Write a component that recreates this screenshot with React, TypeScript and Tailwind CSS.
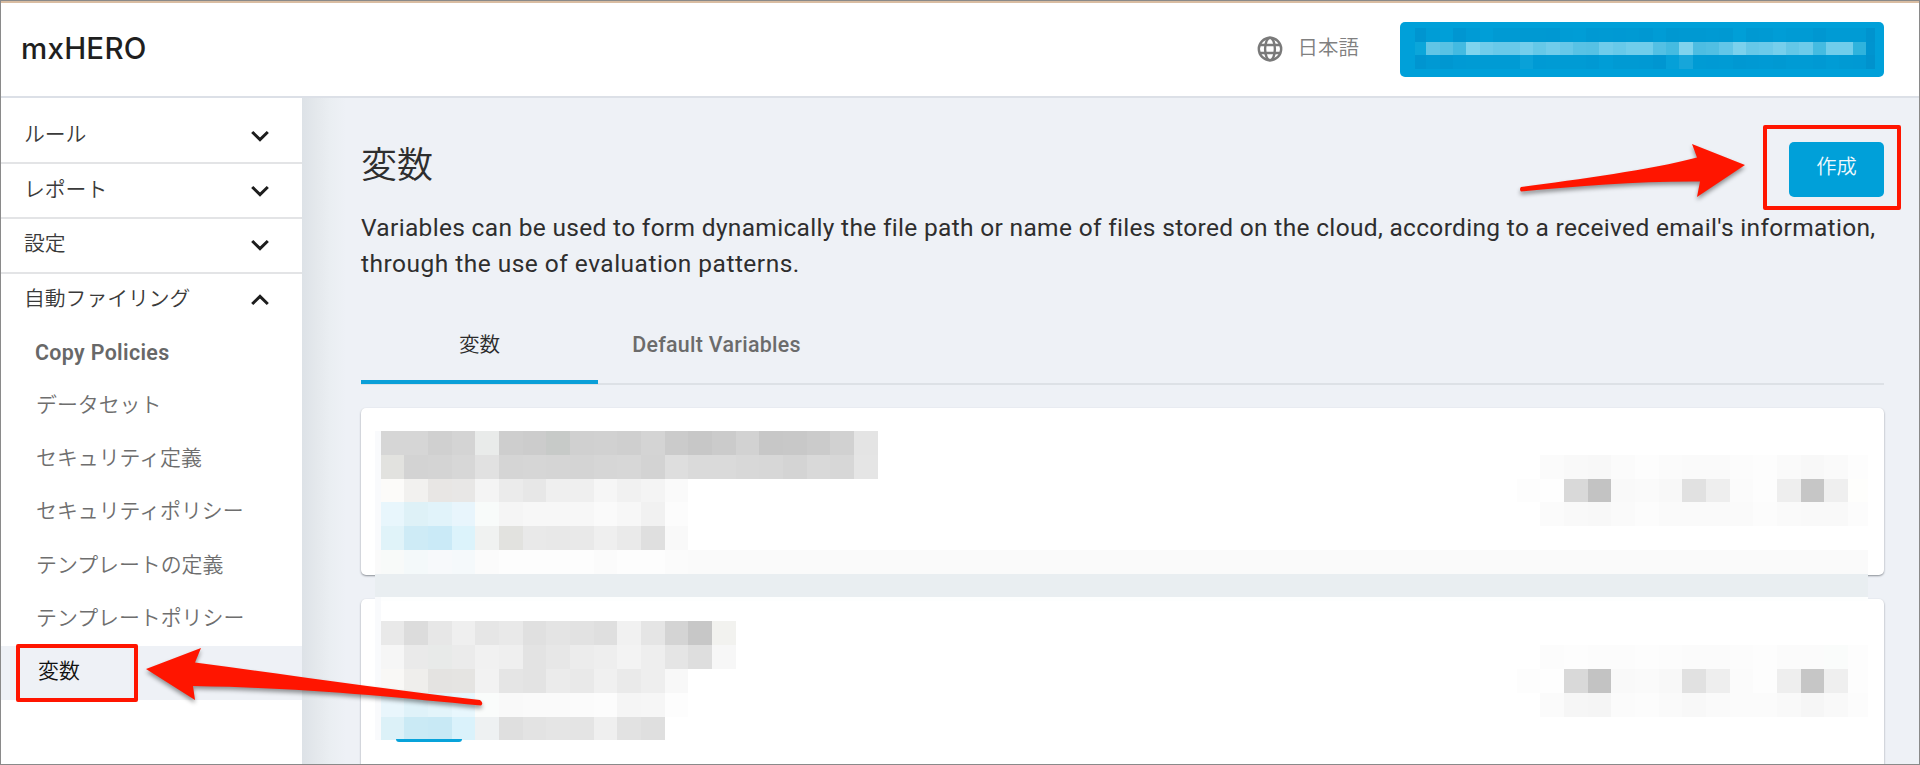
import React from 'react';

interface NavSection {
    label: string;
    open?: boolean;
}

const sections: NavSection[] = [
    { label: 'ルール' },
    { label: 'レポート' },
    { label: '設定' },
    { label: '自動ファイリング', open: true },
];

const subItems = [
    'データセット',
    'セキュリティ定義',
    'セキュリティポリシー',
    'テンプレートの定義',
    'テンプレートポリシー',
];

// Each run: row, first column, then one colour per cell
type Run = [number, number, string];

const leftRuns: Run[] = [
    [0, 0, 'd6d6d6 d6d6d6 d0d0d0 d4d4d4 e9ebea cecece cccccc c7cac8 d0d0d0 d1d1d1 cfcfcf d4d4d4 cbcbcb c7c7c7 cbcbcb d2d2d2 c7c7c7 c8c8c8 cbcbcb d1d1d1 e4e4e4'],
    [1, 0, 'e2e2df d3d3d3 d4d4d4 d7d7d7 e1e1e1 d5d5d5 d6d6d6 d5d5d5 d4d4d4 d6d6d6 d7d7d7 d3d3d3 dedede dadada dadada d8d8d8 d7d7d7 d4d4d4 d9d9d9 d7d7d7 e5e5e5'],
    [2, 0, 'fcfbf9 f2f1ef e8e6e4 e8e7e6 f4f4f4 ebebeb e7e7e7 efefef efefef f6f6f6 f1f1f1 f4f4f4 fafafa'],
    [3, 0, 'e8f6fc def1f7 e1f3fa e8f5fc f8fbfa f5f5f5 f7f7f7 f7f7f7 f7f7f7 fafafa f7f7f7 f1f1f1 fcfcfc'],
    [4, 0, 'e0f3f9 ceebf6 caeaf7 dcf3fb f0f2f1 e2e2df e9e9e9 e8e8e8 e9e9e9 efefef eaeaea dfdfdf f9f9f9'],
    [5, 0, 'f8faf9 f4f9fa f7f9fb f5f9fb fbfbfb fdfdfd fdfdfd fdfdfd fdfdfd fbfbfb fdfdfd fdfdfd fbfbfb'],
    [8, 0, 'e9e9e9 dcdcdc e7e7e7 efefef e6e6e6 e9e9e9 e0e0e0 e4e4e4 e2e2e2 dfdfdf f1f1f1 e5e5e5 d4d4d4 c7c7c7 f2f2ef'],
    [9, 0, 'f6f6f6 eaeaea e8eae9 ebebeb f1f1f1 efefef e3e3e3 e7e7e7 ececec eeeeee f3f3f3 eeeeee e5e5e5 dedede f7f7f7'],
    [10, 0, 'f9f8f6 efeeec e4e3e1 e5e4e2 f2f2f2 e5e5e5 e3e3e3 ebebeb e9e9e9 f0f0f0 eaeaea eeeeee f8f8f8'],
    [11, 0, 'e9f6fc dff2f9 e3f4fa e8f7fd fafcfb f9f9f9 fafafa fafafa fbfbfb fcfcfc f5f5f5 f6f6f6 fdfdfd'],
    [12, 0, 'dcf1f8 caeaf5 c8e9f5 daf2fb eef1f2 dfdfdf e3e3e3 e5e5e5 e4e4e4 efefef e2e2e2 dfdfdf'],
];

const rightRuns: Run[] = [
    [1, 49, 'fbfbfb f9f9f9 f8f8f8 fbfbfb fdfdfd fbfbfb fafafa fafafa fcfcfc fdfdfd fafafa f8f8f8 fafafa fdfdfd'],
    [2, 48, 'fdfdfd fefefe d9d9d9 c3c3c3 f9f9f9 fafafa f8f8f8 e1e1e1 eeeeee fbfbfb fdfdfd eeeeee c6c6c6 efefef fefefc'],
    [3, 49, 'fbfbfb f9f9f9 f8f8f8 fafafa fcfcfc fafafa fafafa fafafa fafafa fcfcfc fafafa f9f9f9 f9f9f9 fcfcfc'],
    [9, 49, 'fcfcfc fdfdfd fcfcfc fcfcfc fdfdfd fcfcfc fbfbfb fbfbfb fcfcfc fdfdfd fbfbfb fbfbfb fafcfb fdfdfd'],
    [10, 48, 'fdfdfd fefefe d9d9d9 c3c3c3 f9f9f9 fafafa f8f8f8 e1e1e1 eeeeee fbfbfb fdfdfd eeeeee c6c6c6 efefef fdfdfd'],
    [11, 49, 'fbfbfb f6f6f6 f5f5f5 fbfbfb fcfcfc fafafa f8f8f8 fafafa fbfbfb fbfbfb f9f9f9 f6f6f6 f9f9f9 fcfcfc'],
];

const barTop = '0095d0 009dd6 009fd8 0096d1 009bd5 009ed7 009ad3 009ad3 0099d2 0099d2 0098d2 009cd5 009dd6 0099d3 009ad3 0099d3 009ad3 0098d2 009cd5 0098d1 0099d2 0099d2 009ad3 0099d2 009fd7 0099d2 009ad3 009dd6 009bd4 009bd4 0097d1 009bd4 009bd4 009bd4 0093ce';
const barMid = '0ba6da 61c5e6 58c2e4 43bae1 7fd4ee 70cceb 69c9e9 69c9e9 74ceec 65c8e8 70cceb 66c8e9 58c2e5 56c1e4 6fcceb 67c9e9 70cdeb 70cdeb 53c0e4 45bbe1 80d3ed 4dbde2 51bfe3 62c6e8 7bd1ed 67c8e8 6bcaea 76cfec 64c7e7 6dcbea 44bbe1 70cdeb 70cdeb 2fb3dd 0094cf';
const barLow = '0095d0 0099d3 0097d1 009ad4 009bd4 009bd4 009bd4 009bd4 09a1d8 009ad4 009bd4 009bd4 009bd4 0099d3 009dd6 009ad3 009ad3 0099d3 0096d1 05a0d8 16a6da 009bd4 009ad4 009bd4 0098d2 0099d3 009ad4 0099d2 009bd4 009bd4 0099d3 009cd5 009ad3 0099d3 0092cd';

const CELL_W = 23.667;
const CELL_H = 23.8;

const Cells: React.FC<{ runs: Run[] }> = ({ runs }) => (
    <>
        {runs.map(([row, col, colors]) =>
            colors.split(' ').map((c, i) => {
                const x = Math.round(5.5 + (col + i) * CELL_W);
                const next = Math.min(Math.round(5.5 + (col + i + 1) * CELL_W), 1493);
                const y = Math.round(row * CELL_H);
                return <rect key={`${row}-${i}`} x={x} y={y} width={next - x} height={Math.round((row + 1) * CELL_H) - y} fill={`#${c}`} />;
            })
        )}
    </>
);

const CardMosaic: React.FC = () => (
    <svg className="absolute left-[14px] top-[23px]" width="1493" height="310" shapeRendering="crispEdges">
        <rect x="0" y="0" width="6" height="143" fill="#f9fafc" />
        <rect x="0" y="119" width="1493" height="24" fill="#fafafa" />
        <rect x="0" y="143" width="1493" height="23" fill="#e9eef1" />
        <rect x="0" y="166" width="1493" height="4" fill="#fdfefe" />
        <rect x="0" y="166" width="6" height="143" fill="#f9fafc" />
        <Cells runs={leftRuns} />
        <Cells runs={rightRuns} />
    </svg>
);

const AccountBar: React.FC = () => (
    <div className="w-[484px] h-[55px] rounded-[5px] bg-[#00a0d9] pl-[15px] pt-[6px]">
        <svg width="460" height="41" shapeRendering="crispEdges">
            {[barTop, barMid, barLow].map((colors, row) =>
                colors.split(' ').map((c, i) => {
                    const x = i === 0 ? 0 : Math.round(11.2 + (i - 1) * 13.33);
                    const next = Math.min(Math.round(11.2 + i * 13.33), 460);
                    return <rect key={`${row}-${i}`} x={x} y={[0, 14, 27][row]} width={next - x} height={[14, 13, 14][row]} fill={`#${c}`} />;
                })
            )}
        </svg>
    </div>
);

const Chevron: React.FC<{ up?: boolean }> = ({ up }) => (
    <svg width="18" height="12" viewBox="0 0 18 12" fill="none" stroke="#1d1d1d" strokeWidth="3">
        <path d={up ? 'M1.2 10L9 2.4L16.8 10' : 'M1.2 2L9 9.6L16.8 2'} />
    </svg>
);

const Globe: React.FC = () => (
    <svg className="-mt-[2px]" width="26" height="26" viewBox="0 0 26 26" fill="none" stroke="#7a7a7a" strokeWidth="2.4">
        <circle cx="13" cy="13" r="11.2" />
        <ellipse cx="13" cy="13" rx="4.9" ry="11.2" />
        <path d="M2.4 9H23.6M2.4 17H23.6" />
    </svg>
);

const App: React.FC = () => (
    <div className="relative w-[1920px] h-[765px] overflow-hidden border border-[#8a8a8a] bg-white font-[Roboto,'Noto_Sans_CJK_JP',sans-serif] text-[#2b2b2b] flex flex-col">
        <div className="h-[2px] shrink-0 bg-[#d9bda2]"></div>
        <header className="h-[95px] shrink-0 flex items-center justify-between border-b-2 border-[#dce0e7] pl-[20px] pr-[35px]">
            <h1 className="-mt-px font-[Inter,sans-serif] font-medium text-[29.5px] leading-none tracking-[0.25px] text-[#1f1f1f]">mxHERO</h1>
            <div className="flex items-center">
                <Globe />
                <span className="ml-[15px] mr-[41px] -mt-[3px] text-[20.5px] font-[350] text-[#808080]">日本語</span>
                <AccountBar />
            </div>
        </header>

        <div className="flex flex-1 min-h-0">
            <aside className="w-[301px] shrink-0 bg-white">
                <div className="h-[11.5px]"></div>
                {sections.map((s) => (
                    <div
                        key={s.label}
                        className={`flex items-center justify-between pl-[23px] pr-[33px] font-[350] ${s.open ? 'h-[53px]' : 'h-[54.7px] border-b-2 border-[#e3e4e6]'}`}
                    >
                        <span className="-mt-[2px] text-[20.8px] leading-[30px] text-[#3a3a3a]">{s.label}</span>
                        <Chevron up={s.open} />
                    </div>
                ))}
                <div className="h-[53.3px] flex items-center pl-[34px] text-[21.4px] font-semibold tracking-[0.35px] text-[#686868]">Copy Policies</div>
                {subItems.map((label) => (
                    <div key={label} className="h-[53.3px] flex items-center pl-[35px] pb-[2px] text-[20.9px] font-[350] text-[#6e6e6e]">{label}</div>
                ))}
                <div className="h-[53.3px] flex items-center pl-[37px] pb-[2px] bg-[#eef1f6] text-[20.9px] font-[350] text-[#111]">変数</div>
            </aside>

            <main className="flex-1 min-w-0 bg-[#eef1f6] bg-[linear-gradient(to_right,#dde2e7_0px,#e4e8ec_14px,#eaeef2_28px,#eef1f6_44px)] pl-[59px] pr-[35px]">
                <div className="flex justify-between h-[120px] pt-[44px]">
                    <h2 className="mt-[-2px] text-[36px] leading-[52px] font-[350] text-[#2e2e2e]">変数</h2>
                    <button className="w-[95px] h-[55px] rounded-[5px] bg-[#00a0d9] pb-[5px] text-[20.3px] font-[350] text-[#f0f9fd]">作成</button>
                </div>
                <p className="h-[88px] -mt-[8px] text-[24.5px] leading-[35.5px] tracking-[0.32px] whitespace-nowrap text-[#2e2e2e]">
                    Variables can be used to form dynamically the file path or name of files stored on the cloud, according to a received email's information,
                    <br />
                    <span className="tracking-[0.48px]">through the use of evaluation patterns.</span>
                </p>
                <div className="flex h-[87px] border-b-2 border-[#dde1e6] font-medium">
                    <div className="w-[237px] h-[86px] flex items-center justify-center border-b-4 border-[#0a9fd8] pt-[12px] text-[20.6px] font-[350] text-[#2b2b2b]">変数</div>
                    <div className="w-[237px] flex items-center justify-center pt-[10px] text-[21.4px] tracking-[0.3px] text-[#6b6b6b]">Default Variables</div>
                </div>
                <div className="relative mt-[23px] flex flex-col gap-[24px]">
                    <div className="h-[167px] rounded-[5px] bg-white shadow-[0_1px_2px_#8a8f96]"></div>
                    <div className="h-[180px] rounded-[5px] bg-white shadow-[0_1px_2px_#8a8f96]"></div>
                    <CardMosaic />
                    <div className="absolute left-[35px] top-[331px] w-[66px] h-[3px] rounded-b-full bg-[#08a3da]"></div>
                </div>
            </main>
        </div>

        {/* Annotations */}
        <div className="absolute left-[15px] top-[643px] w-[122px] h-[58px] rounded-[2px] border-4 border-[#ff1500]"></div>
        <div className="absolute left-[1762px] top-[124px] w-[138px] h-[85px] rounded-[2px] border-4 border-[#ff1500]"></div>
        <svg className="absolute -left-px -top-px drop-shadow-[0_3px_2px_rgba(0,0,0,0.4)] pointer-events-none" width="1920" height="765" fill="#ff1500">
            <path d="M146 669L201 648L195 662.5C290 675 390 690 480 700Q484 703 481 705.5C390 697 310 688 193 686L195 700Z" />
            <path d="M1745 165L1692 144L1697 157.5C1650 170 1580 179 1521 187Q1519 189 1521 191.5C1580 186 1640 181 1700 181.5L1697 197Z" />
        </svg>
    </div>
);

export default App;
